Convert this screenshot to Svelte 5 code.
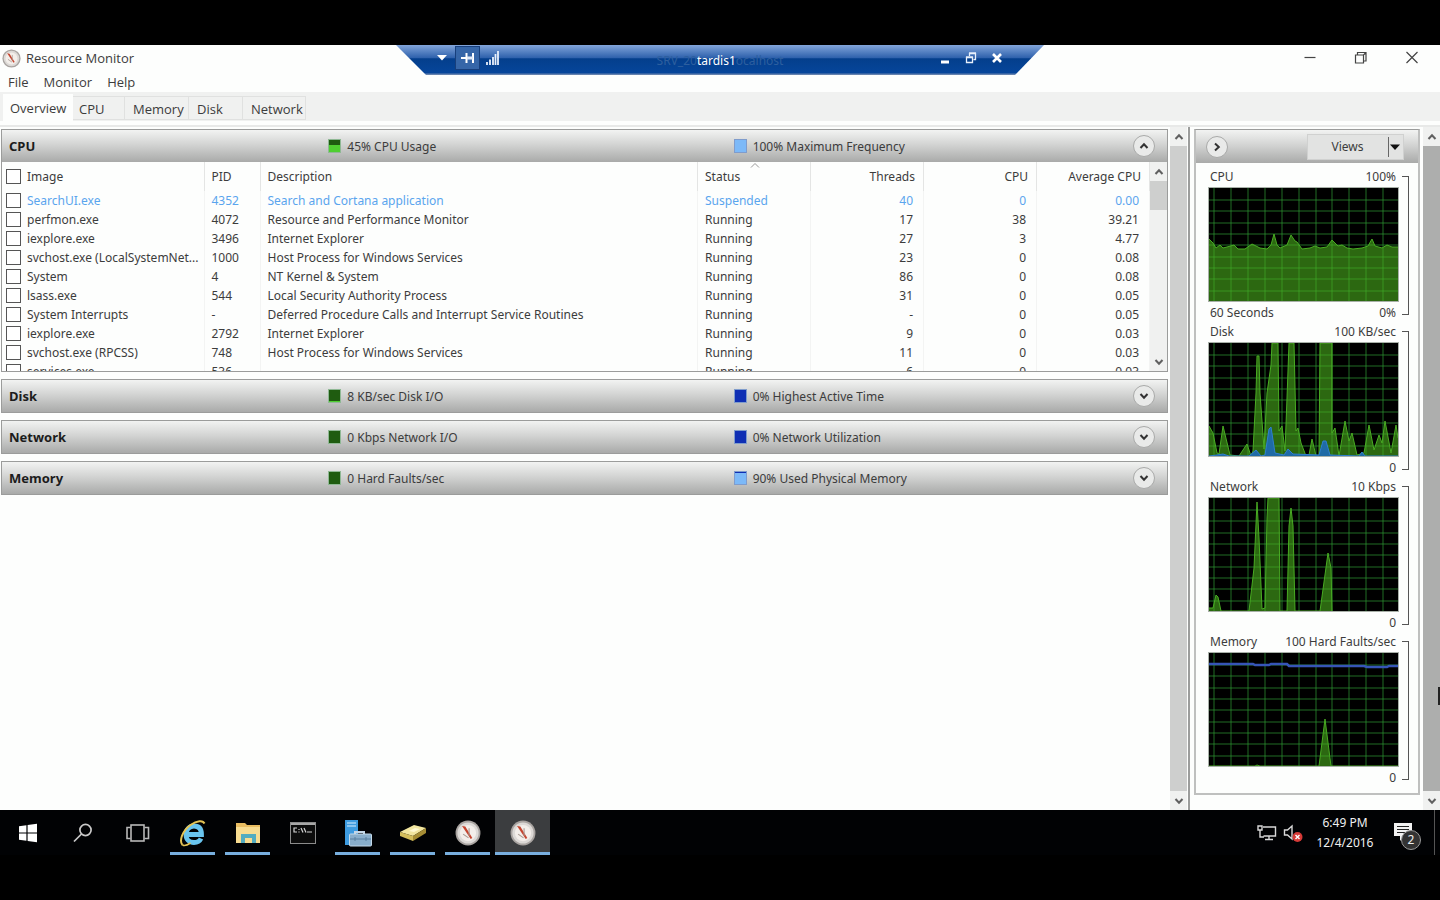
<script>
    let activeTab = $state("Overview");
    let checked = $state({});

    const menus = ["File", "Monitor", "Help"];

    const tabs = [
        { name: "Overview", width: 70 },
        { name: "CPU", width: 52 },
        { name: "Memory", width: 64 },
        { name: "Disk", width: 54 },
        { name: "Network", width: 63 },
    ];

    const processes = [
        { image: "SearchUI.exe", pid: 4352, desc: "Search and Cortana application", status: "Suspended", threads: "40", cpu: 0, avg: "0.00" },
        { image: "perfmon.exe", pid: 4072, desc: "Resource and Performance Monitor", status: "Running", threads: "17", cpu: 38, avg: "39.21" },
        { image: "iexplore.exe", pid: 3496, desc: "Internet Explorer", status: "Running", threads: "27", cpu: 3, avg: "4.77" },
        { image: "svchost.exe (LocalSystemNet...", pid: 1000, desc: "Host Process for Windows Services", status: "Running", threads: "23", cpu: 0, avg: "0.08" },
        { image: "System", pid: 4, desc: "NT Kernel & System", status: "Running", threads: "86", cpu: 0, avg: "0.08" },
        { image: "lsass.exe", pid: 544, desc: "Local Security Authority Process", status: "Running", threads: "31", cpu: 0, avg: "0.05" },
        { image: "System Interrupts", pid: "-", desc: "Deferred Procedure Calls and Interrupt Service Routines", status: "Running", threads: "-", cpu: 0, avg: "0.05" },
        { image: "iexplore.exe", pid: 2792, desc: "Internet Explorer", status: "Running", threads: "9", cpu: 0, avg: "0.03" },
        { image: "svchost.exe (RPCSS)", pid: 748, desc: "Host Process for Windows Services", status: "Running", threads: "11", cpu: 0, avg: "0.03" },
        { image: "services.exe", pid: 536, desc: "", status: "Running", threads: "6", cpu: 0, avg: "0.03" },
    ];

    // level = how much of the little meter is filled, in percent
    const sections = [
        { name: "CPU", left: "45% CPU Usage", leftLevel: 55, right: "100% Maximum Frequency", rightLevel: 100, open: true },
        { name: "Disk", left: "8 KB/sec Disk I/O", leftLevel: 8, right: "0% Highest Active Time", rightLevel: 0 },
        { name: "Network", left: "0 Kbps Network I/O", leftLevel: 0, right: "0% Network Utilization", rightLevel: 0 },
        { name: "Memory", left: "0 Hard Faults/sec", leftLevel: 0, right: "90% Used Physical Memory", rightLevel: 90 },
    ];

    const gridX = [5, 22, 39, 56, 73, 90, 107, 123, 140, 157, 174];
    const gridY = [12, 23, 35, 46, 57, 69, 80, 91, 103];

    const graphs = [
        {
            name: "CPU", max: "100%", foot: "60 Seconds", min: "0%",
            green: "0,51 4,55 7,60 11,57 14,60 18,59 25,57 29,61 36,61 43,56 51,60 58,61 62,57 65,46 68,57 71,60 78,57 82,47 86,53 88,54 93,61 101,60 106,58 111,60 118,59 123,52 129,58 133,57 138,60 144,61 153,60 159,58 163,51 166,58 173,60 178,57 183,59 189,59",
        },
        {
            name: "Disk", max: "100 KB/sec", foot: "", min: "0",
            green: "0,83 4,90 8,110 10,111 14,83 21,112 30,113 38,101 42,113 44,108 47,50 48,13 50,13 51,50 55,106 58,50 62,22 63,0 69,0 70,88 73,83 76,108 78,55 80,0 85,0 87,88 89,85 92,100 97,113 100,112 103,96 107,113 110,113 111,0 123,0 123,90 126,85 130,113 136,78 140,98 143,90 148,112 155,110 160,82 165,107 170,92 173,100 176,78 182,110 187,82 189,95",
            blue: "0,113 8,112 14,111 20,113 40,113 47,107 52,113 56,112 60,86 62,84 66,110 75,112 79,106 84,111 110,112 114,98 117,98 121,112 150,113 153,109 156,113 189,113",
        },
        {
            name: "Network", max: "10 Kbps", foot: "", min: "0",
            green: "0,110 4,110 7,97 9,99 12,113 40,113 45,70 48,4 50,40 53,111 56,110 58,20 59,0 70,0 71,113 78,113 80,28 82,10 84,28 86,113 111,113 119,55 122,70 123,113",
        },
        {
            name: "Memory", max: "100 Hard Faults/sec", foot: "", min: "0",
            green: "0,113 46,113 48,112 51,113 110,113 116,66 122,113 189,113",
            line: "0,11 44,11 46,12 60,12 62,11 78,11 80,13 155,13 158,14 178,14 180,13 189,13",
        },
    ];
</script>

{#snippet chevron(dir)}
    <svg class="chevron {dir}" width="10" height="10" viewBox="0 0 10 10">
        <path d="M1.5 7 5 3.2 8.5 7" />
    </svg>
{/snippet}

{#snippet gauge(size)}
    <svg width={size} height={size} viewBox="0 0 24 24">
        <circle cx="12" cy="12" r="11.5" fill="#a9a4a1" />
        <circle cx="12" cy="12" r="9.8" fill="#dcd9d6" />
        <circle cx="12" cy="12" r="7.5" fill="#f3eeea" />
        <path d="M6.5 5.5 9.5 6 16 16.5 14.5 17.5Z" fill="#c4442f" />
        <path d="M13 7.5v7M7.5 13l5 3.500" stroke="#a99a92" stroke-width="1" />
    </svg>
{/snippet}

{#snippet scrollbar(label)}
    <div class="scrollbar">
        <button aria-label="Scroll {label} up">{@render chevron("up")}</button>
        <div class="thumb"></div>
        <button aria-label="Scroll {label} down">{@render chevron("down")}</button>
    </div>
{/snippet}

<div class="screen">
    <div class="window">
        <header class="titleBar">
            {@render gauge(19)}
            <span class="title">Resource Monitor</span>
            <div class="windowButtons">
                <button aria-label="Minimize">
                    <svg width="14" height="14" viewBox="0 0 14 14"><path d="M1.500 6.500h11" /></svg>
                </button>
                <button aria-label="Restore">
                    <svg width="14" height="14" viewBox="0 0 14 14"><path d="M1.500 4h8v8h-8zM3.500 4V1.500h8.500V10H9.500M9.500 4 12 1.500" /></svg>
                </button>
                <button aria-label="Close">
                    <svg width="14" height="14" viewBox="0 0 14 14"><path d="M1.500 1l11 11M12.500 1l-11 11" /></svg>
                </button>
            </div>
        </header>

        <nav class="menuBar">
            {#each menus as menu}
                <button>{menu}</button>
            {/each}
        </nav>

        <div class="tabBar" role="tablist">
            {#each tabs as tab}
                <button
                    role="tab"
                    aria-selected={activeTab === tab.name}
                    class:active={activeTab === tab.name}
                    style="width: {tab.width}px"
                    onclick={() => activeTab = tab.name}>{tab.name}</button>
            {/each}
        </div>

        <div class="content">
            <main>
                {#each sections as section}
                    <section class:open={section.open}>
                        <div class="sectionHead">
                            <h2>{section.name}</h2>
                            <span class="stat">
                                <span class="meter green"><i style="height: {section.leftLevel}%"></i></span>
                                {section.left}
                            </span>
                            <span class="stat">
                                <span class="meter blue"><i style="height: {section.rightLevel}%"></i></span>
                                {section.right}
                            </span>
                            <button class="round" aria-label="Toggle {section.name}">
                                {@render chevron(section.open ? "up" : "down")}
                            </button>
                        </div>
                        {#if section.open}
                            <div class="tablePane">
                                <div class="tableClip">
                                    <table>
                                        <colgroup>
                                            <col class="cImage" /><col class="cPid" /><col />
                                            <col class="cNum" /><col class="cNum" /><col class="cNum" /><col class="cNum" />
                                        </colgroup>
                                        <thead>
                                            <tr>
                                                <th>
                                                    <label><input type="checkbox" bind:checked={checked.all} />Image</label>
                                                </th>
                                                <th>PID</th>
                                                <th>Description</th>
                                                <th class="sorted">Status
                                                    <svg width="10" height="6" viewBox="0 0 10 6"><path d="M1 5.500 5 1.500 9 5.500" /></svg>
                                                </th>
                                                <th class="num">Threads</th>
                                                <th class="num">CPU</th>
                                                <th class="num">Average CPU</th>
                                            </tr>
                                        </thead>
                                        <tbody>
                                            {#each processes as p}
                                                <tr class:suspended={p.status === "Suspended"}>
                                                    <td>
                                                        <label><input type="checkbox" bind:checked={checked[p.pid]} />{p.image}</label>
                                                    </td>
                                                    <td>{p.pid}</td>
                                                    <td>{p.desc}</td>
                                                    <td>{p.status}</td>
                                                    <td class="num">{p.threads}</td>
                                                    <td class="num">{p.cpu}</td>
                                                    <td class="num">{p.avg}</td>
                                                </tr>
                                            {/each}
                                        </tbody>
                                    </table>
                                </div>
                                <div class="inner">{@render scrollbar("processes")}</div>
                            </div>
                        {/if}
                    </section>
                {/each}
            </main>
            {@render scrollbar("sections")}

            <div class="side">
                <aside>
                    <div class="sideHead">
                        <button class="round" aria-label="Hide graphs">{@render chevron("right")}</button>
                        <button class="views">
                            <span>Views</span>
                            <svg width="16" height="20" viewBox="0 0 16 20">
                                <path d="M1.500 0v20" stroke="#666" />
                                <path d="M3 7.500h10L8 13z" fill="#111" />
                            </svg>
                        </button>
                    </div>
                    {#each graphs as g}
                        <div class="graph">
                            <div class="plot">
                                <div class="caption"><span>{g.name}</span><span>{g.max}</span></div>
                                <svg viewBox="0 0 189 113" preserveAspectRatio="none">
                                    <rect width="189" height="113" fill="#000" />
                                    <g stroke="#2f9a34" stroke-opacity="0.7">
                                        {#each gridX as x}
                                            <path d="M{x} 0V113" />
                                        {/each}
                                        {#each gridY as y}
                                            <path d="M0 {y}H189" />
                                        {/each}
                                    </g>
                                    <polygon points="0,113 {g.green} 189,113" fill="#4cb41e" fill-opacity="0.58" />
                                    <polyline points={g.green} fill="none" stroke="#49ab23" />
                                    {#if g.blue}
                                        <polygon points="0,113 {g.blue} 189,113" fill="#1f6ba6" />
                                        <polyline points={g.blue} fill="none" stroke="#2f7fd0" />
                                    {/if}
                                    {#if g.line}
                                        <polyline points={g.line} fill="none" stroke="#3655b8" stroke-width="2.500" />
                                    {/if}
                                </svg>
                                <div class="caption foot"><span>{g.foot}</span><span>{g.min}</span></div>
                            </div>
                            <div class="bracket"></div>
                        </div>
                    {/each}
                </aside>
                <div class="dark">{@render scrollbar("graphs")}</div>
            </div>
        </div>

        <div class="remoteBar">
            <div class="remoteLeft">
                <svg width="10" height="6" viewBox="0 0 10 6"><path d="M0 0h10L5 5.500z" fill="#fff" /></svg>
                <button class="pin" aria-label="Pin">
                    <svg width="14" height="12" viewBox="0 0 14 12">
                        <path d="M0 6h5M5.500 1v10M6 6h6M12 1v10" fill="none" stroke="#fff" stroke-width="2" />
                        <path d="M6 4.500h6v3H6z" fill="#dfe9f8" />
                    </svg>
                </button>
                <svg width="13" height="14" viewBox="0 0 13 14">
                    <path d="M1 14V11M4 14V8.500M7 14V6M9.500 14V3M12 14V0" stroke="#e8f0fb" stroke-width="1.800" />
                </svg>
            </div>
            <span class="ghost">SRV_20</span>
            <span class="host">tardis1</span>
            <span class="ghost">ocalhost</span>
            <div class="remoteRight">
                <button aria-label="Minimize session">
                    <svg width="10" height="12" viewBox="0 0 10 12"><path d="M1 10h8" stroke="#fff" stroke-width="3" /></svg>
                </button>
                <button aria-label="Restore session">
                    <svg width="12" height="12" viewBox="0 0 12 12"><path d="M1.500 5.500h6v5h-6zM1 5h7M4.500 4V1.500h6v6H8.500M4 1h7" fill="none" stroke="#e8f0fb" stroke-width="1.300" /></svg>
                </button>
                <button aria-label="Close session">
                    <svg width="10" height="12" viewBox="0 0 10 12"><path d="M1 2l8 8M9 2l-8 8" stroke="#fff" stroke-width="2.600" /></svg>
                </button>
            </div>
        </div>
        <div class="pointer"></div>
    </div>

    <footer class="taskBar">
        <button aria-label="Start">
            <svg width="20" height="20" viewBox="0 0 20 20" fill="#fff">
                <path d="M1 3.300 8.400 2.300V9.400H1zM9.600 2.100 19 .8V9.400H9.600zM1 10.600h7.400v7.100L1 16.700zM9.600 10.600H19v8.600l-9.400-1.300z" />
            </svg>
        </button>
        <button aria-label="Search">
            <svg width="20" height="20" viewBox="0 0 20 20" fill="none" stroke="#c8c8c8" stroke-width="1.700">
                <circle cx="12.500" cy="7" r="5.600" /><path d="M8.500 11 1 18.500" />
            </svg>
        </button>
        <button aria-label="Task view">
            <svg width="24" height="18" viewBox="0 0 24 18" fill="none" stroke="#b8b8b8" stroke-width="1.600">
                <rect x="5" y="1" width="13" height="16" /><path d="M4.500 3.500H1v11h3.500M18.500 3.500H22.500v11h-4" />
            </svg>
        </button>
        <button class="running" aria-label="Internet Explorer">
            <svg width="28" height="28" viewBox="0 0 28 28" fill="none">
                <path d="M7 15.500H22.500C22.500 9.500 19.500 7 15 7S7 10.500 7 15.500s3 8 8 8c3.500 0 5.800-1.500 7-4" stroke="#69c4ee" stroke-width="4.800" />
                <path d="M3.500 26C0 22 3 12 11.500 6 18 1.500 24 1 25.500 4.500" stroke="#e6c455" stroke-width="2" />
                <path d="M3.500 26c2 1.200 5 0 8-2" stroke="#e6c455" stroke-width="1.600" />
            </svg>
        </button>
        <button class="running" aria-label="File Explorer">
            <svg width="26" height="22" viewBox="0 0 26 22">
                <path d="M1 1h9l2 2h13v18H1z" fill="#e9bd62" />
                <path d="M1 5h24v16H1z" fill="#f8dc91" />
                <path d="M6 12h15v9h-4v-5h-7v5H6z" fill="#53acc0" />
            </svg>
        </button>
        <button aria-label="Command Prompt">
            <svg width="26" height="22" viewBox="0 0 26 22">
                <rect x=".5" y=".5" width="25" height="21" fill="#0c0c0c" stroke="#8b8b8b" />
                <path d="M1 2h24" stroke="#a8a8a8" stroke-width="2" />
                <path d="M7 6H4v4h3M9 7v1M9 9.500v1M11 6l2 4.500M14 6l2 4.500M17 10h5" fill="none" stroke="#d4d4d4" stroke-width="1.200" />
            </svg>
        </button>
        <button class="running" aria-label="Server Manager">
            <svg width="30" height="28" viewBox="0 0 30 28">
                <path d="M2 1h13v25H2z" fill="#3d9be0" />
                <path d="M4 4h9M4 7h9" stroke="#a5d4f5" stroke-width="1.300" />
                <path d="M12 15v-2h9v2" fill="none" stroke="#c3d5e5" stroke-width="2" />
                <rect x="6.500" y="15" width="22" height="12" rx="1" fill="#89aecb" stroke="#c3d9ea" />
                <path d="M7 20h21M12 18v4M23 18v4" stroke="#587f9e" />
            </svg>
        </button>
        <button class="running" aria-label="Storage">
            <svg class="lift" width="28" height="18" viewBox="0 0 28 18">
                <path d="M1 8 15 1 27 4 14 12z" fill="#f2e6a0" />
                <path d="M1 8l13 4v5L1 12z" fill="#d3bd5c" />
                <path d="M14 12 27 4v5L14 17z" fill="#a68d35" />
                <path d="M10 7l6-3 5 1-6 3z" fill="#fff9d2" />
            </svg>
        </button>
        <button class="running" aria-label="Performance Monitor">{@render gauge(26)}</button>
        <button class="running current" aria-label="Resource Monitor">{@render gauge(26)}</button>

        <div class="tray">
            <svg width="20" height="18" viewBox="0 0 20 18" fill="none" stroke="#d8d8d8" stroke-width="1.400">
                <path d="M6 3h12.500v9H6.500M12 12v3M8 15.500h8M1 2h4v4H1zM3 6v7h4" />
            </svg>
            <svg class="volume" width="20" height="20" viewBox="0 0 20 20">
                <path d="M1.500 7h3L9 3v13l-4.500-4h-3z" fill="none" stroke="#d8d8d8" stroke-width="1.400" />
                <circle cx="14.500" cy="14" r="5" fill="#d63a37" />
                <path d="M12.500 12l4 4M16.500 12l-4 4" stroke="#fff" stroke-width="1.400" />
            </svg>
            <div class="clock"><span>6:49 PM</span><span>12/4/2016</span></div>
            <button class="notify" aria-label="Notifications">
                <svg width="20" height="20" viewBox="0 0 20 20">
                    <path d="M1 1h18v13h-8l-4 5v-5H1z" fill="#f2f2f2" />
                    <path d="M4 4.500h12M4 7.500h12M4 10.500h8" stroke="#222" stroke-width="1.200" />
                </svg>
                <span class="badge">2</span>
            </button>
        </div>
    </footer>
</div>

<style>
    :global(body) {
        margin: 0;
        background: #000;
    }

    .screen {
        box-sizing: border-box;
        min-height: 100vh;
        padding: 45px 0;
        display: flex;
        flex-direction: column;
        background: #000;
        font-family: "Noto Sans", "Open Sans", sans-serif;
        font-size: 12px;
        color: #3c3c3c;
    }

    .screen :global(*) {
        box-sizing: border-box;
    }

    button {
        margin: 0;
        padding: 0;
        border: 0;
        background: none;
        font: inherit;
        color: inherit;
    }

    svg {
        display: block;
        flex: none;
    }

    .window {
        position: relative;
        flex: 1;
        display: flex;
        flex-direction: column;
        background: #fdfefd;
    }

    .titleBar,
    .menuBar,
    .tabBar {
        font-family: "Open Sans", "Noto Sans", sans-serif;
        font-size: 13px;
    }

    .titleBar {
        display: flex;
        align-items: center;
        gap: 5px;
        height: 26px;
        padding-left: 2px;
    }

    .windowButtons {
        display: flex;
        margin-left: auto;
        padding-right: 3px;
    }

    .windowButtons button {
        width: 51px;
        height: 24px;
        display: grid;
        place-items: center;
    }

    .windowButtons path {
        fill: none;
        stroke: #444;
        stroke-width: 1.2;
    }

    .menuBar {
        display: flex;
        gap: 15px;
        height: 21px;
        padding-left: 8px;
    }

    .tabBar {
        display: flex;
        align-items: flex-end;
        height: 30px;
        padding: 0 3px;
        background: #f0f1f0;
        border-bottom: 1px solid #fdfefd;
    }

    .tabBar button {
        height: 24px;
        margin-bottom: 1px;
        padding: 2px 0 0 6px;
        border: 1px solid #e0e1e0;
        border-left: 0;
        text-align: left;
        white-space: nowrap;
    }

    .tabBar button:nth-child(n + 3) {
        padding-left: 8px;
    }

    .tabBar button.active {
        height: 27px;
        margin-bottom: 0;
        padding: 0 0 0 7px;
        border: 0;
        background: #fdfefd;
    }

    .content {
        flex: 1;
        display: flex;
        margin-top: 3px;
        border-top: 2px solid #e8e9e8;
    }

    main {
        flex: 1;
        min-width: 0;
        display: flex;
        flex-direction: column;
        gap: 7px;
        padding: 2px 2px 0 1px;
    }

    section {
        border: 1px solid #9b9c9b;
    }

    .sectionHead {
        position: relative;
        display: grid;
        grid-template-columns: 326fr 405fr 433fr;
        align-items: center;
        height: 32px;
        background: linear-gradient(#f2f3f2, #d3d4d3 45%, #a9aaa9);
    }

    h2 {
        margin: 0;
        padding-left: 7px;
        font-size: 13px;
        font-weight: 700;
        color: #1c1c1c;
    }

    .stat {
        display: flex;
        align-items: center;
        gap: 6px;
    }

    .meter {
        display: flex;
        align-items: flex-end;
        width: 13px;
        height: 14px;
        border: 1px solid #8fb894;
    }

    .meter i {
        width: 100%;
    }

    .green {
        background: #1f5c10;
    }

    .green i {
        background: #4fcf30;
    }

    .blue {
        background: #0f2fb4;
        border-color: #7f9ccc;
    }

    .blue i {
        background: #7cb9f8;
    }

    .round {
        display: grid;
        place-items: center;
        width: 22px;
        height: 22px;
        border: 1px solid #a9aaa9;
        border-radius: 50%;
        background: #e9eae9;
    }

    .sectionHead .round {
        position: absolute;
        right: 12px;
    }

    .chevron path {
        fill: none;
        stroke: #333;
        stroke-width: 2;
    }

    .chevron.down {
        transform: rotate(180deg);
    }

    .chevron.right {
        transform: rotate(90deg);
    }

    .tablePane {
        display: flex;
        height: 209px;
    }

    .tableClip {
        flex: 1;
        min-width: 0;
        overflow: hidden;
    }

    table {
        width: 100%;
        table-layout: fixed;
        border-collapse: collapse;
    }

    .cImage {
        width: 202px;
    }

    .cPid {
        width: 56px;
    }

    .cNum {
        width: 113px;
    }

    th,
    td {
        height: 19px;
        padding: 0 7px;
        border-right: 1px solid #f3f4f3;
        font-weight: 400;
        line-height: 19px;
        text-align: left;
        white-space: nowrap;
    }

    th {
        height: 29px;
        border-color: #e4e5e4;
    }

    th:first-child,
    td:first-child {
        padding: 0 0 0 4px;
    }

    th.num {
        padding-right: 8px;
    }

    td.num {
        padding-right: 10px;
    }

    .num {
        text-align: right;
    }

    .sorted {
        position: relative;
    }

    .sorted svg {
        position: absolute;
        top: 0;
        left: 46%;
    }

    .sorted path {
        fill: none;
        stroke: #999;
    }

    label {
        display: flex;
        align-items: center;
        gap: 6px;
    }

    input {
        appearance: none;
        flex: none;
        width: 15px;
        height: 15px;
        margin: 0;
        border: 1px solid #555;
        background: #fff;
    }

    input:checked {
        background: #555;
    }

    .suspended {
        color: #5aa5ee;
    }

    .inner,
    .dark {
        display: flex;
    }

    .scrollbar {
        display: flex;
        flex-direction: column;
        width: 17px;
        background: #f0f1f0;
    }

    .scrollbar button {
        display: grid;
        place-items: center;
        height: 19px;
    }

    .scrollbar .chevron path {
        stroke: #606060;
    }

    .thumb {
        flex: 1;
        background: #cecfce;
    }

    .inner .thumb {
        flex: none;
        height: 29px;
    }

    .inner button:last-child {
        margin-top: auto;
    }

    .dark .thumb {
        background: #adaead;
    }

    .side {
        display: flex;
        align-items: stretch;
        gap: 3px;
        margin-left: 1px;
        padding-left: 4px;
        border-left: 2px solid #9c9d9c;
    }

    aside {
        align-self: flex-start;
        width: 226px;
        margin-top: 2px;
        padding-bottom: 7px;
        border: 2px solid #bfc0bf;
        border-top: 1px solid #9b9c9b;
    }

    .sideHead {
        display: flex;
        align-items: center;
        justify-content: space-between;
        height: 33px;
        margin-bottom: 3px;
        padding: 0 14px 0 10px;
        background: linear-gradient(#f2f3f2, #d3d4d3 45%, #a9aaa9);
    }

    .views {
        display: flex;
        align-items: center;
        width: 97px;
        height: 26px;
        border: 1px solid #d0d1d0;
        background: #e2e3e2;
    }

    .views span {
        flex: 1;
    }

    .graph {
        display: flex;
        gap: 3px;
        padding: 0 9px 0 12px;
    }

    .plot {
        flex: 1;
    }

    .plot svg {
        width: 100%;
        height: 115px;
        border: 1px solid #a8b0a8;
    }

    .caption {
        display: flex;
        justify-content: space-between;
        height: 21px;
        padding: 0 3px 0 2px;
        line-height: 21px;
        white-space: nowrap;
    }

    .foot {
        height: 19px;
    }

    .bracket {
        width: 7px;
        margin: 10px 0 6px;
        border: 1px solid #555;
        border-left: 0;
    }

    .remoteBar {
        position: absolute;
        top: 0;
        left: 50%;
        transform: translateX(-50%);
        display: flex;
        align-items: center;
        justify-content: center;
        width: 648px;
        height: 30px;
        background: linear-gradient(#82a5da, #2f62ad 42%, #043f8c 46%, #06459a 92%, #7f93b4);
        clip-path: polygon(0 0, 100% 0, calc(100% - 29px) 100%, 30px 100%);
        color: #fff;
    }

    .remoteLeft,
    .remoteRight {
        position: absolute;
        top: 1px;
        display: flex;
        align-items: center;
        height: 24px;
    }

    .remoteLeft {
        left: 41px;
        gap: 8px;
    }

    .remoteRight {
        right: 42px;
        gap: 15px;
    }

    .pin {
        display: grid;
        place-items: center;
        width: 25px;
        height: 24px;
        margin-right: -2px;
        border: 1px solid #173f7c;
        background: #3666a8;
    }

    .ghost {
        color: #2d5f9f;
    }

    .pointer {
        position: absolute;
        right: 0;
        bottom: 105px;
        width: 2px;
        height: 18px;
        background: #222;
    }

    .taskBar {
        display: flex;
        height: 45px;
        background: #010204;
    }

    .taskBar > button {
        position: relative;
        display: grid;
        place-items: center;
        width: 55px;
    }

    .running::after {
        content: "";
        position: absolute;
        bottom: 0;
        left: 5px;
        right: 5px;
        height: 3px;
        background: #78aede;
    }

    .current {
        background: #3b3d3f;
    }

    .current::after {
        left: 0;
        right: 0;
    }

    .tray {
        display: flex;
        align-items: center;
        margin-left: auto;
        padding-right: 5px;
        color: #f0f0f0;
    }

    .volume {
        margin-left: 6px;
    }

    .clock {
        display: flex;
        flex-direction: column;
        width: 84px;
        text-align: center;
        line-height: 20px;
    }

    .notify {
        position: relative;
        display: flex;
        align-items: flex-start;
        width: 48px;
        height: 45px;
        padding: 12px 6px 0;
        border-right: 1px solid #555;
    }

    .badge {
        position: absolute;
        top: 20px;
        left: 14px;
        width: 20px;
        height: 20px;
        border: 1px solid #999;
        border-radius: 50%;
        background: #333;
        line-height: 18px;
        text-align: center;
    }
</style>
